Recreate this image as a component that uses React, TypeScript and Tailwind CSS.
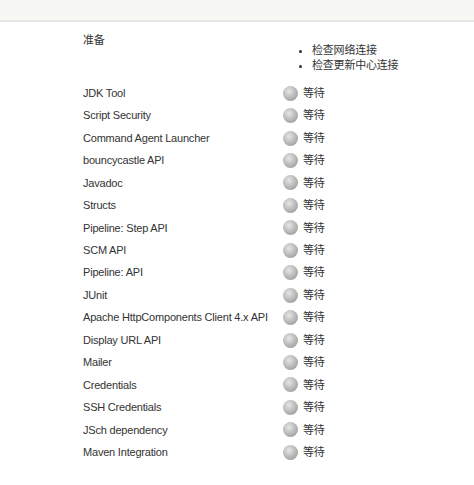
const PLUGINS = [
  "JDK Tool",
  "Script Security",
  "Command Agent Launcher",
  "bouncycastle API",
  "Javadoc",
  "Structs",
  "Pipeline: Step API",
  "SCM API",
  "Pipeline: API",
  "JUnit",
  "Apache HttpComponents Client 4.x API",
  "Display URL API",
  "Mailer",
  "Credentials",
  "SSH Credentials",
  "JSch dependency",
  "Maven Integration",
];

function Ball() {
  return (
    <span className="inline-block w-[15px] h-[15px] rounded-full bg-[radial-gradient(circle_at_40%_35%,#e6e6e6_0%,#b4b4b4_55%,#8e8e8e_100%)]" />
  );
}

export default function App() {
  return (
    <div className="w-[474px] h-[485px] bg-white text-[11px] tracking-[-0.2px] text-[#333] font-['Liberation_Sans','Noto_Sans_CJK_SC',sans-serif]">
      {/* header bar */}
      <div className="h-[22px] bg-[#f7f8f3] border-b-2 border-[#e6e6e4]" />

      <div className="pl-[83px] pt-[10px]">
        {/* 准备 */}
        <div className="flex">
          <div className="w-[200px] leading-[16px]">准备</div>
          <ul className="pt-[11px] pl-[29px] list-disc leading-[15px]">
            <li>检查网络连接</li>
            <li>检查更新中心连接</li>
          </ul>
        </div>

        {/* plugin rows */}
        <div className="mt-[9px]">
          {PLUGINS.map((name) => (
            <div key={name} className="flex items-center h-[22.45px]">
              <div className="w-[200px] whitespace-nowrap">{name}</div>
              <div className="flex items-center gap-[5px]">
                <Ball />
                <span>等待</span>
              </div>
            </div>
          ))}
        </div>
      </div>
    </div>
  );
}
